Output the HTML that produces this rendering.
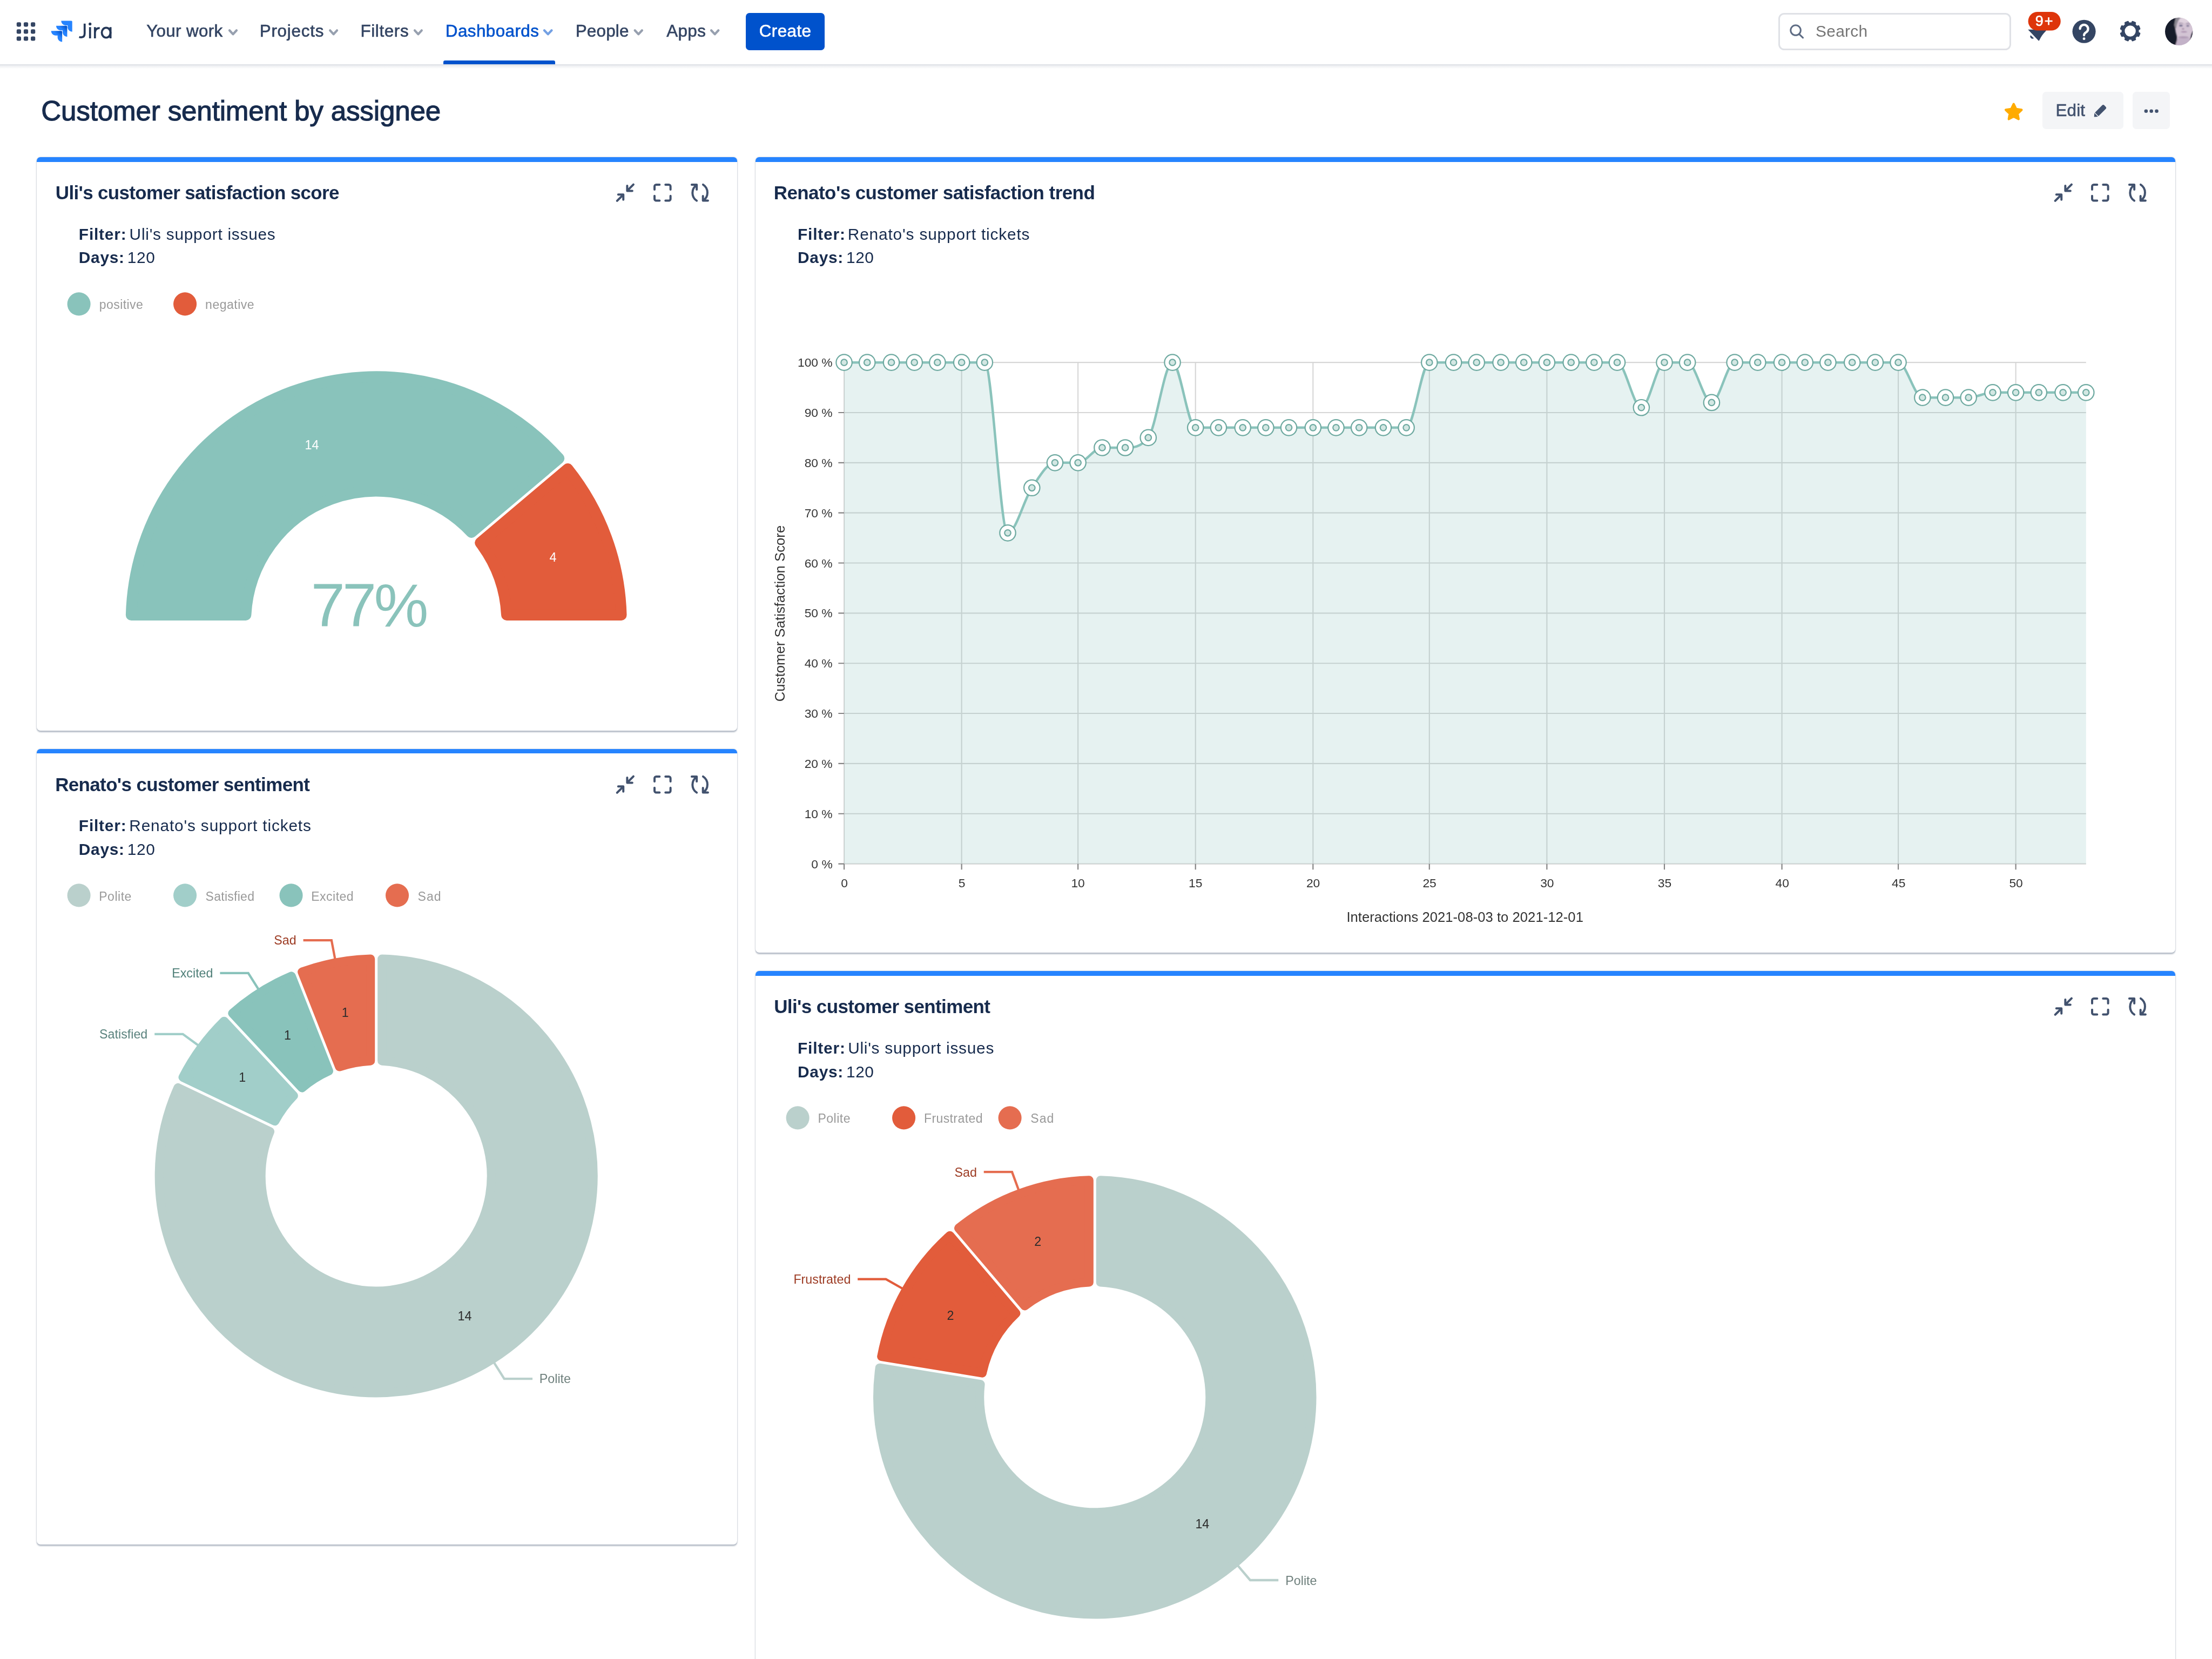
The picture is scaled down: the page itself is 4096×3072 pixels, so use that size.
<!DOCTYPE html>
<html lang="en"><head><meta charset="utf-8"><title>Customer sentiment by assignee - Jira</title>
<style>
*{box-sizing:border-box;margin:0;padding:0}
html,body{width:4096px;height:3072px;overflow:hidden;background:#fff}
body{font-family:"Liberation Sans",sans-serif;-webkit-font-smoothing:antialiased}
#root{position:absolute;left:0;top:0;width:1920px;height:1440px;overflow:hidden;background:#fff;zoom:2.1333333;will-change:transform}
.abs{position:absolute;overflow:visible}
.t{position:absolute;white-space:pre;display:block}
.m{-webkit-text-stroke:0.3px currentColor}
.m2{-webkit-text-stroke:0.55px currentColor}
.nav{position:absolute;left:0;top:0;width:1920px;height:56px;background:#fff}
.navshadow{position:absolute;left:0;top:56px;width:1920px;height:4px;background:linear-gradient(180deg,rgba(9,30,66,0.13) 0,rgba(9,30,66,0.13) 1px,rgba(9,30,66,0.08) 1px,rgba(9,30,66,0) 4px)}
.uline{position:absolute;left:384.9px;top:52.6px;width:97.1px;height:3.4px;background:#0052CC;border-radius:1.5px 1.5px 0 0}
.create{position:absolute;left:647.3px;top:11.2px;width:68.5px;height:32.2px;background:#0052CC;border-radius:3.2px}
.search{position:absolute;left:1543.7px;top:11.3px;width:201.9px;height:32.2px;border:1.7px solid #DFE1E6;border-radius:5px;background:#fff}
.btn{position:absolute;background:#F4F5F7;border-radius:3.2px}
.gadget{position:absolute;background:#fff;border-radius:3.2px;box-shadow:0 0 1px rgba(9,30,66,0.31),0 1px 1px rgba(9,30,66,0.25)}
.gbar{position:absolute;left:0;top:0;right:0;height:4.1px;background:#2684FF;border-radius:3.2px 3.2px 0 0}
</style></head>
<body><div id="root">
<div class="nav">
<svg class="abs" width="700" height="56" viewBox="0 0 700 56"><g fill="#344563"><rect x="14.40" y="19.30" width="3.85" height="3.85" rx="1.1"/><rect x="20.55" y="19.30" width="3.85" height="3.85" rx="1.1"/><rect x="26.70" y="19.30" width="3.85" height="3.85" rx="1.1"/><rect x="14.40" y="25.45" width="3.85" height="3.85" rx="1.1"/><rect x="20.55" y="25.45" width="3.85" height="3.85" rx="1.1"/><rect x="26.70" y="25.45" width="3.85" height="3.85" rx="1.1"/><rect x="14.40" y="31.60" width="3.85" height="3.85" rx="1.1"/><rect x="20.55" y="31.60" width="3.85" height="3.85" rx="1.1"/><rect x="26.70" y="31.60" width="3.85" height="3.85" rx="1.1"/></g>
<defs>
<linearGradient id="jg1" x1="98.03%" y1="0.16%" x2="58.89%" y2="40.77%"><stop offset="18%" stop-color="#0052CC"/><stop offset="100%" stop-color="#2684FF"/></linearGradient>
</defs>
<g transform="translate(41.3 14.95) scale(0.765)">
<path d="M26.94 4H15.41c0 2.87 2.33 5.2 5.2 5.2h2.12v2.05c0 2.87 2.33 5.19 5.19 5.19V4.99A.99.99 0 0 0 26.94 4z" fill="#2684FF"/>
<path d="M21.23 9.74H9.71c0 2.87 2.32 5.19 5.19 5.2h2.12v2.05c.01 2.87 2.33 5.19 5.2 5.19V10.73a.99.99 0 0 0-.99-.99z" fill="url(#jg1)"/>
<path d="M15.53 15.48H4c0 2.87 2.33 5.2 5.2 5.2h2.13v2.05c0 2.86 2.32 5.19 5.18 5.19V16.47a.99.99 0 0 0-.98-.99z" fill="url(#jg1)"/>
</g>
<path d="M199.20 26.4 L202.25 29.7 L205.30 26.4" fill="none" stroke="#42526E" stroke-opacity="0.55" stroke-width="2" stroke-linecap="round" stroke-linejoin="round"/>
<path d="M286.50 26.4 L289.50 29.7 L292.50 26.4" fill="none" stroke="#42526E" stroke-opacity="0.55" stroke-width="2" stroke-linecap="round" stroke-linejoin="round"/>
<path d="M360.00 26.4 L363.00 29.7 L366.00 26.4" fill="none" stroke="#42526E" stroke-opacity="0.55" stroke-width="2" stroke-linecap="round" stroke-linejoin="round"/>
<path d="M472.50 26.4 L475.65 29.7 L478.80 26.4" fill="none" stroke="#0052CC" stroke-opacity="0.55" stroke-width="2" stroke-linecap="round" stroke-linejoin="round"/>
<path d="M551.10 26.4 L554.20 29.7 L557.30 26.4" fill="none" stroke="#42526E" stroke-opacity="0.55" stroke-width="2" stroke-linecap="round" stroke-linejoin="round"/>
<path d="M617.40 26.4 L620.50 29.7 L623.60 26.4" fill="none" stroke="#42526E" stroke-opacity="0.55" stroke-width="2" stroke-linecap="round" stroke-linejoin="round"/>
</svg>
<svg class="abs" width="110" height="56" viewBox="0 0 110 56" role="img" aria-label="Jira"><title>Jira</title><g fill="none" stroke="#253858" stroke-width="1.75"><path d="M73.48 20.55 V29.1 Q73.48 32.4 70.5 32.4 Q69.6 32.4 68.7 32.1"/><path d="M78.16 23.6 V33.23 M82.41 23.6 V33.23 M82.41 28.2 Q82.6 24.3 86.55 24.3 M95.93 23.6 V33.23"/><ellipse cx="92.15" cy="28.4" rx="3.78" ry="4.3"/></g><circle cx="78.16" cy="20.83" r="1.22" fill="#253858"/></svg>
<span class="t m" id="n1" style="left:127.13px;top:19.76px;font-size:14.7px;line-height:14.7px;color:#344563;letter-spacing:0.160px;">Your work</span>
<span class="t m" id="n2" style="left:225.34px;top:19.76px;font-size:14.7px;line-height:14.7px;color:#344563;letter-spacing:0.362px;">Projects</span>
<span class="t m" id="n3" style="left:312.84px;top:19.76px;font-size:14.7px;line-height:14.7px;color:#344563;letter-spacing:0.303px;">Filters</span>
<span class="t m" id="n4" style="left:386.64px;top:19.76px;font-size:14.7px;line-height:14.7px;color:#0052CC;letter-spacing:0.208px;">Dashboards</span>
<span class="t m" id="n5" style="left:499.54px;top:19.76px;font-size:14.7px;line-height:14.7px;color:#344563;letter-spacing:0.117px;">People</span>
<span class="t m" id="n6" style="left:578.52px;top:19.76px;font-size:14.7px;line-height:14.7px;color:#344563;letter-spacing:0.185px;">Apps</span>
<div class="uline"></div>
<div class="create"></div>
<span class="t m" id="create" style="left:658.90px;top:19.76px;font-size:14.7px;line-height:14.7px;color:#fff;letter-spacing:0.216px;">Create</span>
<div class="search"></div>
<span class="t" id="search" style="left:1575.96px;top:20.35px;font-size:14px;line-height:14px;color:#757575;letter-spacing:0.137px;">Search</span>
<svg class="abs" style="left:1540px" width="380" height="56" viewBox="1540 0 380 56"><circle cx="1558.76" cy="26.28" r="4.36" fill="none" stroke="#5E6C84" stroke-width="1.4"/><path d="M1561.9 29.7 L1565.05 32.75" stroke="#5E6C84" stroke-width="1.45" stroke-linecap="round"/><path d="M1760.45 25.7 L1776.3 25.7 L1775.95 26.95 Q1772.2 30.6 1770.25 35.1 Q1769.8 35.75 1769.35 35.1 Z" fill="#344563"/><path d="M1762.71 30.58 L1765.54 33.18 A1.95 1.95 0 0 1 1762.71 30.58 Z" fill="#344563"/><rect x="1760.6" y="10.3" width="28.2" height="16.2" rx="8.1" fill="#DE350B"/><circle cx="1809.1" cy="27.3" r="10.1" fill="#344563"/><path d="M1805.6 25.0 A3.5 3.5 0 1 1 1810.9 28.0 Q1809.1 29.1 1809.1 30.6" fill="none" stroke="#fff" stroke-width="2" stroke-linecap="round"/><circle cx="1809.1" cy="33.6" r="1.15" fill="#fff"/><g fill="#344563"><rect x="-2.0" y="-9.0" width="4.0" height="3.4" rx="0.9" transform="translate(1849.2 27) rotate(22.5)"/><rect x="-2.0" y="-9.0" width="4.0" height="3.4" rx="0.9" transform="translate(1849.2 27) rotate(67.5)"/><rect x="-2.0" y="-9.0" width="4.0" height="3.4" rx="0.9" transform="translate(1849.2 27) rotate(112.5)"/><rect x="-2.0" y="-9.0" width="4.0" height="3.4" rx="0.9" transform="translate(1849.2 27) rotate(157.5)"/><rect x="-2.0" y="-9.0" width="4.0" height="3.4" rx="0.9" transform="translate(1849.2 27) rotate(202.5)"/><rect x="-2.0" y="-9.0" width="4.0" height="3.4" rx="0.9" transform="translate(1849.2 27) rotate(247.5)"/><rect x="-2.0" y="-9.0" width="4.0" height="3.4" rx="0.9" transform="translate(1849.2 27) rotate(292.5)"/><rect x="-2.0" y="-9.0" width="4.0" height="3.4" rx="0.9" transform="translate(1849.2 27) rotate(337.5)"/></g><circle cx="1849.2" cy="27" r="6.15" fill="none" stroke="#344563" stroke-width="2.7"/><defs><clipPath id="avc"><circle cx="0" cy="0" r="12.05"/></clipPath>
<filter id="avb" x="-20%" y="-20%" width="140%" height="140%"><feGaussianBlur stdDeviation="0.45"/></filter></defs>
<g transform="translate(1891.46 27.34)" clip-path="url(#avc)"><rect x="-13" y="-13" width="26" height="26" fill="#d3c4d4"/>
<g filter="url(#avb)">
<ellipse cx="4.5" cy="9.5" rx="8" ry="4.5" fill="#c3b2c8"/>
<ellipse cx="3.8" cy="5.0" rx="4.8" ry="0.9" fill="#a892ae" opacity="0.75"/>
<ellipse cx="4.4" cy="0.3" rx="2.7" ry="0.6" fill="#a78cab"/>
<ellipse cx="3.6" cy="-2.3" rx="1.0" ry="0.6" fill="#9f86a0"/>
<ellipse cx="1.7" cy="-5.1" rx="1.5" ry="0.75" fill="#6f6a8a"/>
<ellipse cx="7.7" cy="-4.85" rx="1.25" ry="0.65" fill="#77708f"/>
<path d="M0.2 -6.8 Q2 -8 3.6 -6.9 M6.2 -6.6 Q7.8 -7.6 9.4 -6.4" stroke="#9a8aa2" stroke-width="0.7" fill="none"/>
<ellipse cx="4.5" cy="-9.5" rx="4.5" ry="2.2" fill="#e0d3df"/>
<path d="M-2.2 -12.5 L1.6 -12.3 L-0.8 -9.1 L-1.8 -6.3 L-2.5 -2.6 L-3.6 -3.0 L-4.4 -5.7 L-3.8 -9.1 Z" fill="#8b8892"/>
<path d="M-2.4 -13 L-3.5 -9.1 L-4.1 -5.7 L-3.3 -3.0 L-2.8 0.6 L-1.8 4.2 L-1.6 7.1 L-2.7 11.0 L-3 13 L-13 13 L-13 -13 Z" fill="#171b2a"/>
<path d="M10.9 2.4 L12.2 -0.5 L13 0 L13 8 L9.7 7.4 Z" fill="#1b1b2b"/>
</g></g></svg>
<span class="t m" id="badge" style="left:1766.66px;top:12.08px;font-size:12.6px;line-height:12.6px;color:#fff;letter-spacing:0.946px;">9+</span>
</div>
<div class="navshadow"></div>
<span class="t m2" id="ptitle" style="left:35.76px;top:84.58px;font-size:24px;line-height:24px;color:#172B4D;letter-spacing:-0.088px;">Customer sentiment by assignee</span>
<div class="btn" style="left:1772.7px;top:79.9px;width:70.2px;height:32.3px"></div>
<div class="btn" style="left:1851.1px;top:79.9px;width:32.3px;height:32.3px"></div>
<span class="t m" id="edit" style="left:1784.34px;top:88.76px;font-size:14.7px;line-height:14.7px;color:#42526E;letter-spacing:0.061px;">Edit</span>
<svg class="abs" style="left:1730px;top:76px" width="170" height="40" viewBox="1730 76 170 40">
<polygon points="1747.70,90.40 1749.79,94.73 1754.55,95.38 1751.08,98.70 1751.93,103.42 1747.70,101.15 1743.47,103.42 1744.32,98.70 1740.85,95.38 1745.61,94.73" fill="#FFAB00" stroke="#FFAB00" stroke-width="2" stroke-linejoin="round"/>
<g fill="#42526E"><circle cx="1862.6" cy="96.5" r="1.55"/><circle cx="1867.2" cy="96.5" r="1.55"/><circle cx="1871.8" cy="96.5" r="1.55"/></g>
<g transform="translate(1817.4 101.7) rotate(-45)" fill="#42526E"><path d="M0.45 -0.25 L2.75 -2.2 V2.2 L0.45 0.25 Q0.1 0 0.45 -0.25 Z"/><path d="M3.4 -2.2 H12.2 A1.35 1.35 0 0 1 13.55 -0.85 V0.85 A1.35 1.35 0 0 1 12.2 2.2 H3.4 Z"/></g>
</svg>
<div class="gadget" id="g1" style="left:32px;top:136.5px;width:608px;height:497.5px">
<div class="gbar"></div>
<svg class="abs" style="left:0;top:0" width="608" height="497.5" viewBox="0 0 608 497.5"><path d="M82.08 397.35 A212.70 212.70 0 0 1 453.26 261.52 L377.35 325.66 A113.40 113.40 0 0 0 181.46 397.35 Z" fill="#89C3BB" stroke="#89C3BB" stroke-width="9.6" stroke-linejoin="round"/><path d="M460.94 270.61 A212.70 212.70 0 0 1 507.32 397.35 L407.94 397.35 A113.40 113.40 0 0 0 385.04 334.75 Z" fill="#E25C3B" stroke="#E25C3B" stroke-width="9.6" stroke-linejoin="round"/></svg><span class="t" id="g1v1" style="left:232.62px;top:244.76px;font-size:10.9px;line-height:10.9px;color:#fff;">14</span><span class="t" id="g1v2" style="left:444.92px;top:342.21px;font-size:10.9px;line-height:10.9px;color:#fff;">4</span><span class="t" id="g1pct" style="left:237.87px;top:362.47px;font-size:53.2px;line-height:53.2px;color:#8AC3BB;letter-spacing:-2.227px;">77%</span>
<span class="t" id="g1t" style="left:16.22px;top:22.52px;font-size:16.4px;line-height:16.4px;color:#172B4D;font-weight:700;letter-spacing:-0.310px;">Uli's customer satisfaction score</span>
<span class="t" id="g1f1" style="left:36.36px;top:59.75px;font-size:14px;line-height:14px;color:#172B4D;font-weight:700;letter-spacing:0.382px;">Filter:</span>
<span class="t" id="g1f2" style="left:80.32px;top:59.75px;font-size:14px;line-height:14px;color:#172B4D;letter-spacing:0.343px;">Uli's support issues</span>
<span class="t" id="g1d1" style="left:36.36px;top:80.25px;font-size:14px;line-height:14px;color:#172B4D;font-weight:700;letter-spacing:0.338px;">Days:</span>
<span class="t" id="g1d2" style="left:78.53px;top:80.25px;font-size:14px;line-height:14px;color:#172B4D;letter-spacing:0.277px;">120</span>
<svg class="abs" style="left:502.9px;top:22.95px" width="15.75" height="15.75" viewBox="0 0 16 16"><path d="M15.2 0.8 L9.9 6.1 M9.7 1.9 V6.4 H14.2 M0.8 15.2 L6.1 9.9 M1.8 9.7 H6.3 V14.2" fill="none" stroke="#42526E" stroke-width="1.9" stroke-linecap="round" stroke-linejoin="round"/></svg>
<svg class="abs" style="left:535.2px;top:22.95px" width="15.75" height="15.75" viewBox="0 0 16 16"><path d="M0.95 5.2 V2.45 A1.5 1.5 0 0 1 2.45 0.95 H5.4 M10.6 0.95 H13.55 A1.5 1.5 0 0 1 15.05 2.45 V5.2 M15.05 10.8 V13.55 A1.5 1.5 0 0 1 13.55 15.05 H10.6 M5.4 15.05 H2.45 A1.5 1.5 0 0 1 0.95 13.55 V10.8" fill="none" stroke="#42526E" stroke-width="1.9" stroke-linecap="round"/></svg>
<svg class="abs" style="left:567.3px;top:22.95px" width="15.75" height="15.75" viewBox="0 0 16 16"><path d="M5.2 1.2 A8.4 8.4 0 0 0 5.3 15.1 M0.9 0.95 H5.3 V5.2 M10.9 0.9 A8.4 8.4 0 0 1 10.9 15.0 M15.2 15.05 H10.8 V10.9" fill="none" stroke="#42526E" stroke-width="1.9" stroke-linecap="round" stroke-linejoin="round"/></svg>
<svg class="abs" style="left:0;top:110px" width="608" height="36" viewBox="0 110 608 36"><circle cx="36.6" cy="127.3" r="10.1" fill="#89C3BB"/><circle cx="128.7" cy="127.3" r="10.1" fill="#E25C3B"/></svg>
<span class="t" id="g1l0" style="left:54.10px;top:122.86px;font-size:10.8px;line-height:10.8px;color:#999;letter-spacing:0.208px;">positive</span>
<span class="t" id="g1l1" style="left:146.18px;top:122.86px;font-size:10.8px;line-height:10.8px;color:#999;letter-spacing:0.224px;">negative</span>
</div>
<div class="gadget" id="g2" style="left:656px;top:136.5px;width:1232px;height:690.5px">
<div class="gbar"></div>
<svg class="abs" style="left:0;top:0" width="1232" height="690.5" viewBox="0 0 1232 690.5"><path d="M71.90 613.40H1154.90M71.90 569.88H1154.90M71.90 526.36H1154.90M71.90 482.84H1154.90M71.90 439.32H1154.90M71.90 395.80H1154.90M71.90 352.28H1154.90M71.90 308.76H1154.90M71.90 265.24H1154.90M71.90 221.72H1154.90M71.90 178.20H1154.90M76.90 178.20V618.40M178.90 178.20V618.40M279.90 178.20V618.40M381.90 178.20V618.40M483.90 178.20V618.40M584.90 178.20V618.40M686.90 178.20V618.40M788.90 178.20V618.40M890.90 178.20V618.40M991.90 178.20V618.40M1093.90 178.20V618.40" fill="none" stroke="#000" stroke-opacity="0.16" stroke-width="1"/><path d="M71.90 613.40H76.90M71.90 569.88H76.90M71.90 526.36H76.90M71.90 482.84H76.90M71.90 439.32H76.90M71.90 395.80H76.90M71.90 352.28H76.90M71.90 308.76H76.90M71.90 265.24H76.90M71.90 221.72H76.90M71.90 178.20H76.90M76.90 613.40V618.40M178.90 613.40V618.40M279.90 613.40V618.40M381.90 613.40V618.40M483.90 613.40V618.40M584.90 613.40V618.40M686.90 613.40V618.40M788.90 613.40V618.40M890.90 613.40V618.40M991.90 613.40V618.40M1093.90 613.40V618.40" fill="none" stroke="#000" stroke-opacity="0.38" stroke-width="1"/><path d="M76.90 178.20 C83.57 178.20 90.23 178.20 96.90 178.20 C103.90 178.20 110.90 178.20 117.90 178.20 C124.57 178.20 131.23 178.20 137.90 178.20 C144.57 178.20 151.23 178.20 157.90 178.20 C164.90 178.20 171.90 178.20 178.90 178.20 C185.57 178.20 192.23 178.20 198.90 178.20 C205.57 178.20 212.23 326.17 218.90 326.17 C225.90 326.17 232.90 297.34 239.90 287.00 C246.57 277.16 253.23 265.24 259.90 265.24 C266.57 265.24 273.23 265.24 279.90 265.24 C286.90 265.24 293.90 252.18 300.90 252.18 C307.57 252.18 314.23 252.18 320.90 252.18 C327.57 252.18 334.23 252.18 340.90 243.48 C347.90 234.34 354.90 178.20 361.90 178.20 C368.57 178.20 375.23 234.78 381.90 234.78 C388.57 234.78 395.23 234.78 401.90 234.78 C408.90 234.78 415.90 234.78 422.90 234.78 C429.57 234.78 436.23 234.78 442.90 234.78 C449.57 234.78 456.23 234.78 462.90 234.78 C469.90 234.78 476.90 234.78 483.90 234.78 C490.57 234.78 497.23 234.78 503.90 234.78 C510.57 234.78 517.23 234.78 523.90 234.78 C530.90 234.78 537.90 234.78 544.90 234.78 C551.57 234.78 558.23 234.78 564.90 234.78 C571.57 234.78 578.23 178.20 584.90 178.20 C591.90 178.20 598.90 178.20 605.90 178.20 C612.57 178.20 619.23 178.20 625.90 178.20 C632.90 178.20 639.90 178.20 646.90 178.20 C653.57 178.20 660.23 178.20 666.90 178.20 C673.57 178.20 680.23 178.20 686.90 178.20 C693.90 178.20 700.90 178.20 707.90 178.20 C714.57 178.20 721.23 178.20 727.90 178.20 C734.57 178.20 741.23 178.20 747.90 178.20 C754.90 178.20 761.90 217.37 768.90 217.37 C775.57 217.37 782.23 178.20 788.90 178.20 C795.57 178.20 802.23 178.20 808.90 178.20 C815.90 178.20 822.90 213.02 829.90 213.02 C836.57 213.02 843.23 178.20 849.90 178.20 C856.57 178.20 863.23 178.20 869.90 178.20 C876.90 178.20 883.90 178.20 890.90 178.20 C897.57 178.20 904.23 178.20 910.90 178.20 C917.57 178.20 924.23 178.20 930.90 178.20 C937.90 178.20 944.90 178.20 951.90 178.20 C958.57 178.20 965.23 178.20 971.90 178.20 C978.57 178.20 985.23 178.20 991.90 178.20 C998.90 178.20 1005.90 208.66 1012.90 208.66 C1019.57 208.66 1026.23 208.66 1032.90 208.66 C1039.57 208.66 1046.23 208.66 1052.90 208.66 C1059.90 208.66 1066.90 204.31 1073.90 204.31 C1080.57 204.31 1087.23 204.31 1093.90 204.31 C1100.57 204.31 1107.23 204.31 1113.90 204.31 C1120.90 204.31 1127.90 204.31 1134.90 204.31 C1141.57 204.31 1148.23 204.31 1154.90 204.31 L1154.90 613.40 L76.90 613.40 Z" fill="#8AC3BB" fill-opacity="0.21"/><path d="M76.90 178.20 C83.57 178.20 90.23 178.20 96.90 178.20 C103.90 178.20 110.90 178.20 117.90 178.20 C124.57 178.20 131.23 178.20 137.90 178.20 C144.57 178.20 151.23 178.20 157.90 178.20 C164.90 178.20 171.90 178.20 178.90 178.20 C185.57 178.20 192.23 178.20 198.90 178.20 C205.57 178.20 212.23 326.17 218.90 326.17 C225.90 326.17 232.90 297.34 239.90 287.00 C246.57 277.16 253.23 265.24 259.90 265.24 C266.57 265.24 273.23 265.24 279.90 265.24 C286.90 265.24 293.90 252.18 300.90 252.18 C307.57 252.18 314.23 252.18 320.90 252.18 C327.57 252.18 334.23 252.18 340.90 243.48 C347.90 234.34 354.90 178.20 361.90 178.20 C368.57 178.20 375.23 234.78 381.90 234.78 C388.57 234.78 395.23 234.78 401.90 234.78 C408.90 234.78 415.90 234.78 422.90 234.78 C429.57 234.78 436.23 234.78 442.90 234.78 C449.57 234.78 456.23 234.78 462.90 234.78 C469.90 234.78 476.90 234.78 483.90 234.78 C490.57 234.78 497.23 234.78 503.90 234.78 C510.57 234.78 517.23 234.78 523.90 234.78 C530.90 234.78 537.90 234.78 544.90 234.78 C551.57 234.78 558.23 234.78 564.90 234.78 C571.57 234.78 578.23 178.20 584.90 178.20 C591.90 178.20 598.90 178.20 605.90 178.20 C612.57 178.20 619.23 178.20 625.90 178.20 C632.90 178.20 639.90 178.20 646.90 178.20 C653.57 178.20 660.23 178.20 666.90 178.20 C673.57 178.20 680.23 178.20 686.90 178.20 C693.90 178.20 700.90 178.20 707.90 178.20 C714.57 178.20 721.23 178.20 727.90 178.20 C734.57 178.20 741.23 178.20 747.90 178.20 C754.90 178.20 761.90 217.37 768.90 217.37 C775.57 217.37 782.23 178.20 788.90 178.20 C795.57 178.20 802.23 178.20 808.90 178.20 C815.90 178.20 822.90 213.02 829.90 213.02 C836.57 213.02 843.23 178.20 849.90 178.20 C856.57 178.20 863.23 178.20 869.90 178.20 C876.90 178.20 883.90 178.20 890.90 178.20 C897.57 178.20 904.23 178.20 910.90 178.20 C917.57 178.20 924.23 178.20 930.90 178.20 C937.90 178.20 944.90 178.20 951.90 178.20 C958.57 178.20 965.23 178.20 971.90 178.20 C978.57 178.20 985.23 178.20 991.90 178.20 C998.90 178.20 1005.90 208.66 1012.90 208.66 C1019.57 208.66 1026.23 208.66 1032.90 208.66 C1039.57 208.66 1046.23 208.66 1052.90 208.66 C1059.90 208.66 1066.90 204.31 1073.90 204.31 C1080.57 204.31 1087.23 204.31 1093.90 204.31 C1100.57 204.31 1107.23 204.31 1113.90 204.31 C1120.90 204.31 1127.90 204.31 1134.90 204.31 C1141.57 204.31 1148.23 204.31 1154.90 204.31" fill="none" stroke="#8AC3BB" stroke-width="2.1" stroke-linejoin="round"/><g fill="#fff" stroke="#6FAAA1" stroke-width="1.05"><circle cx="76.90" cy="178.20" r="6.9"/><circle cx="96.90" cy="178.20" r="6.9"/><circle cx="117.90" cy="178.20" r="6.9"/><circle cx="137.90" cy="178.20" r="6.9"/><circle cx="157.90" cy="178.20" r="6.9"/><circle cx="178.90" cy="178.20" r="6.9"/><circle cx="198.90" cy="178.20" r="6.9"/><circle cx="218.90" cy="326.17" r="6.9"/><circle cx="239.90" cy="287.00" r="6.9"/><circle cx="259.90" cy="265.24" r="6.9"/><circle cx="279.90" cy="265.24" r="6.9"/><circle cx="300.90" cy="252.18" r="6.9"/><circle cx="320.90" cy="252.18" r="6.9"/><circle cx="340.90" cy="243.48" r="6.9"/><circle cx="361.90" cy="178.20" r="6.9"/><circle cx="381.90" cy="234.78" r="6.9"/><circle cx="401.90" cy="234.78" r="6.9"/><circle cx="422.90" cy="234.78" r="6.9"/><circle cx="442.90" cy="234.78" r="6.9"/><circle cx="462.90" cy="234.78" r="6.9"/><circle cx="483.90" cy="234.78" r="6.9"/><circle cx="503.90" cy="234.78" r="6.9"/><circle cx="523.90" cy="234.78" r="6.9"/><circle cx="544.90" cy="234.78" r="6.9"/><circle cx="564.90" cy="234.78" r="6.9"/><circle cx="584.90" cy="178.20" r="6.9"/><circle cx="605.90" cy="178.20" r="6.9"/><circle cx="625.90" cy="178.20" r="6.9"/><circle cx="646.90" cy="178.20" r="6.9"/><circle cx="666.90" cy="178.20" r="6.9"/><circle cx="686.90" cy="178.20" r="6.9"/><circle cx="707.90" cy="178.20" r="6.9"/><circle cx="727.90" cy="178.20" r="6.9"/><circle cx="747.90" cy="178.20" r="6.9"/><circle cx="768.90" cy="217.37" r="6.9"/><circle cx="788.90" cy="178.20" r="6.9"/><circle cx="808.90" cy="178.20" r="6.9"/><circle cx="829.90" cy="213.02" r="6.9"/><circle cx="849.90" cy="178.20" r="6.9"/><circle cx="869.90" cy="178.20" r="6.9"/><circle cx="890.90" cy="178.20" r="6.9"/><circle cx="910.90" cy="178.20" r="6.9"/><circle cx="930.90" cy="178.20" r="6.9"/><circle cx="951.90" cy="178.20" r="6.9"/><circle cx="971.90" cy="178.20" r="6.9"/><circle cx="991.90" cy="178.20" r="6.9"/><circle cx="1012.90" cy="208.66" r="6.9"/><circle cx="1032.90" cy="208.66" r="6.9"/><circle cx="1052.90" cy="208.66" r="6.9"/><circle cx="1073.90" cy="204.31" r="6.9"/><circle cx="1093.90" cy="204.31" r="6.9"/><circle cx="1113.90" cy="204.31" r="6.9"/><circle cx="1134.90" cy="204.31" r="6.9"/><circle cx="1154.90" cy="204.31" r="6.9"/></g><g fill="#D3E7E3" stroke="#6FAAA1" stroke-width="1.05"><circle cx="76.90" cy="178.20" r="2.7"/><circle cx="96.90" cy="178.20" r="2.7"/><circle cx="117.90" cy="178.20" r="2.7"/><circle cx="137.90" cy="178.20" r="2.7"/><circle cx="157.90" cy="178.20" r="2.7"/><circle cx="178.90" cy="178.20" r="2.7"/><circle cx="198.90" cy="178.20" r="2.7"/><circle cx="218.90" cy="326.17" r="2.7"/><circle cx="239.90" cy="287.00" r="2.7"/><circle cx="259.90" cy="265.24" r="2.7"/><circle cx="279.90" cy="265.24" r="2.7"/><circle cx="300.90" cy="252.18" r="2.7"/><circle cx="320.90" cy="252.18" r="2.7"/><circle cx="340.90" cy="243.48" r="2.7"/><circle cx="361.90" cy="178.20" r="2.7"/><circle cx="381.90" cy="234.78" r="2.7"/><circle cx="401.90" cy="234.78" r="2.7"/><circle cx="422.90" cy="234.78" r="2.7"/><circle cx="442.90" cy="234.78" r="2.7"/><circle cx="462.90" cy="234.78" r="2.7"/><circle cx="483.90" cy="234.78" r="2.7"/><circle cx="503.90" cy="234.78" r="2.7"/><circle cx="523.90" cy="234.78" r="2.7"/><circle cx="544.90" cy="234.78" r="2.7"/><circle cx="564.90" cy="234.78" r="2.7"/><circle cx="584.90" cy="178.20" r="2.7"/><circle cx="605.90" cy="178.20" r="2.7"/><circle cx="625.90" cy="178.20" r="2.7"/><circle cx="646.90" cy="178.20" r="2.7"/><circle cx="666.90" cy="178.20" r="2.7"/><circle cx="686.90" cy="178.20" r="2.7"/><circle cx="707.90" cy="178.20" r="2.7"/><circle cx="727.90" cy="178.20" r="2.7"/><circle cx="747.90" cy="178.20" r="2.7"/><circle cx="768.90" cy="217.37" r="2.7"/><circle cx="788.90" cy="178.20" r="2.7"/><circle cx="808.90" cy="178.20" r="2.7"/><circle cx="829.90" cy="213.02" r="2.7"/><circle cx="849.90" cy="178.20" r="2.7"/><circle cx="869.90" cy="178.20" r="2.7"/><circle cx="890.90" cy="178.20" r="2.7"/><circle cx="910.90" cy="178.20" r="2.7"/><circle cx="930.90" cy="178.20" r="2.7"/><circle cx="951.90" cy="178.20" r="2.7"/><circle cx="971.90" cy="178.20" r="2.7"/><circle cx="991.90" cy="178.20" r="2.7"/><circle cx="1012.90" cy="208.66" r="2.7"/><circle cx="1032.90" cy="208.66" r="2.7"/><circle cx="1052.90" cy="208.66" r="2.7"/><circle cx="1073.90" cy="204.31" r="2.7"/><circle cx="1093.90" cy="204.31" r="2.7"/><circle cx="1113.90" cy="204.31" r="2.7"/><circle cx="1134.90" cy="204.31" r="2.7"/><circle cx="1154.90" cy="204.31" r="2.7"/></g></svg><span class="t" id="yt0" style="left:48.24px;top:608.19px;font-size:10.7px;line-height:10.7px;color:#333;">0 %</span><span class="t" id="yt1" style="left:42.29px;top:564.67px;font-size:10.7px;line-height:10.7px;color:#333;">10 %</span><span class="t" id="yt2" style="left:42.29px;top:521.15px;font-size:10.7px;line-height:10.7px;color:#333;">20 %</span><span class="t" id="yt3" style="left:42.29px;top:477.63px;font-size:10.7px;line-height:10.7px;color:#333;">30 %</span><span class="t" id="yt4" style="left:42.29px;top:434.11px;font-size:10.7px;line-height:10.7px;color:#333;">40 %</span><span class="t" id="yt5" style="left:42.29px;top:390.59px;font-size:10.7px;line-height:10.7px;color:#333;">50 %</span><span class="t" id="yt6" style="left:42.29px;top:347.07px;font-size:10.7px;line-height:10.7px;color:#333;">60 %</span><span class="t" id="yt7" style="left:42.29px;top:303.55px;font-size:10.7px;line-height:10.7px;color:#333;">70 %</span><span class="t" id="yt8" style="left:42.29px;top:260.03px;font-size:10.7px;line-height:10.7px;color:#333;">80 %</span><span class="t" id="yt9" style="left:42.29px;top:216.51px;font-size:10.7px;line-height:10.7px;color:#333;">90 %</span><span class="t" id="yt10" style="left:36.34px;top:172.99px;font-size:10.7px;line-height:10.7px;color:#333;">100 %</span><span class="t" id="xt0" style="left:73.92px;top:624.74px;font-size:10.7px;line-height:10.7px;color:#333;">0</span><span class="t" id="xt5" style="left:175.94px;top:624.74px;font-size:10.7px;line-height:10.7px;color:#333;">5</span><span class="t" id="xt10" style="left:273.75px;top:624.74px;font-size:10.7px;line-height:10.7px;color:#333;">10</span><span class="t" id="xt15" style="left:375.77px;top:624.74px;font-size:10.7px;line-height:10.7px;color:#333;">15</span><span class="t" id="xt20" style="left:477.89px;top:624.74px;font-size:10.7px;line-height:10.7px;color:#333;">20</span><span class="t" id="xt25" style="left:578.90px;top:624.74px;font-size:10.7px;line-height:10.7px;color:#333;">25</span><span class="t" id="xt30" style="left:680.95px;top:624.74px;font-size:10.7px;line-height:10.7px;color:#333;">30</span><span class="t" id="xt35" style="left:782.97px;top:624.74px;font-size:10.7px;line-height:10.7px;color:#333;">35</span><span class="t" id="xt40" style="left:885.04px;top:624.74px;font-size:10.7px;line-height:10.7px;color:#333;">40</span><span class="t" id="xt45" style="left:986.05px;top:624.74px;font-size:10.7px;line-height:10.7px;color:#333;">45</span><span class="t" id="xt50" style="left:1087.94px;top:624.74px;font-size:10.7px;line-height:10.7px;color:#333;">50</span><span class="t" id="xtitle" style="left:512.79px;top:653.64px;font-size:12px;line-height:12px;color:#333;letter-spacing:0.025px;">Interactions 2021-08-03 to 2021-12-01</span><span class="t" id="ytitle" style="left:21.2px;top:395.80px;font-size:12px;line-height:12px;color:#333;letter-spacing:0.042px;transform:translate(-50%,-50%) rotate(-90deg);">Customer Satisfaction Score</span>
<span class="t" id="g2t" style="left:15.60px;top:22.52px;font-size:16.4px;line-height:16.4px;color:#172B4D;font-weight:700;letter-spacing:-0.262px;">Renato's customer satisfaction trend</span>
<span class="t" id="g2f1" style="left:36.36px;top:59.75px;font-size:14px;line-height:14px;color:#172B4D;font-weight:700;letter-spacing:0.382px;">Filter:</span>
<span class="t" id="g2f2" style="left:79.85px;top:59.75px;font-size:14px;line-height:14px;color:#172B4D;letter-spacing:0.386px;">Renato's support tickets</span>
<span class="t" id="g2d1" style="left:36.36px;top:80.25px;font-size:14px;line-height:14px;color:#172B4D;font-weight:700;letter-spacing:0.338px;">Days:</span>
<span class="t" id="g2d2" style="left:78.53px;top:80.25px;font-size:14px;line-height:14px;color:#172B4D;letter-spacing:0.277px;">120</span>
<svg class="abs" style="left:1126.9px;top:22.95px" width="15.75" height="15.75" viewBox="0 0 16 16"><path d="M15.2 0.8 L9.9 6.1 M9.7 1.9 V6.4 H14.2 M0.8 15.2 L6.1 9.9 M1.8 9.7 H6.3 V14.2" fill="none" stroke="#42526E" stroke-width="1.9" stroke-linecap="round" stroke-linejoin="round"/></svg>
<svg class="abs" style="left:1159.2px;top:22.95px" width="15.75" height="15.75" viewBox="0 0 16 16"><path d="M0.95 5.2 V2.45 A1.5 1.5 0 0 1 2.45 0.95 H5.4 M10.6 0.95 H13.55 A1.5 1.5 0 0 1 15.05 2.45 V5.2 M15.05 10.8 V13.55 A1.5 1.5 0 0 1 13.55 15.05 H10.6 M5.4 15.05 H2.45 A1.5 1.5 0 0 1 0.95 13.55 V10.8" fill="none" stroke="#42526E" stroke-width="1.9" stroke-linecap="round"/></svg>
<svg class="abs" style="left:1191.3px;top:22.95px" width="15.75" height="15.75" viewBox="0 0 16 16"><path d="M5.2 1.2 A8.4 8.4 0 0 0 5.3 15.1 M0.9 0.95 H5.3 V5.2 M10.9 0.9 A8.4 8.4 0 0 1 10.9 15.0 M15.2 15.05 H10.8 V10.9" fill="none" stroke="#42526E" stroke-width="1.9" stroke-linecap="round" stroke-linejoin="round"/></svg>
</div>
<div class="gadget" id="g3" style="left:32px;top:650px;width:608px;height:690.5px">
<div class="gbar"></div>
<svg class="abs" style="left:0;top:0" width="608" height="690.5" viewBox="0 0 608 690.5"><path d="M396.99 532.63 L405.80 546.58 L430.30 546.58" fill="none" stroke="#BAD0CC" stroke-width="2" stroke-linejoin="miter"/><path d="M140.10 257.15 L126.80 247.39 L102.30 247.39" fill="none" stroke="#A1CEC9" stroke-width="2" stroke-linejoin="miter"/><path d="M192.41 208.37 L183.60 194.42 L159.10 194.42" fill="none" stroke="#89C3BB" stroke-width="2" stroke-linejoin="miter"/><path d="M258.94 182.16 L255.87 165.95 L231.37 165.95" fill="none" stroke="#E56D50" stroke-width="2" stroke-linejoin="miter"/><path d="M299.65 182.17 A188.40 188.40 0 1 1 122.58 293.89 L202.51 332.01 A99.90 99.90 0 1 0 299.65 270.72 Z" fill="#BAD0CC" stroke="#BAD0CC" stroke-width="7.6" stroke-linejoin="round"/><path d="M126.84 284.95 A188.40 188.40 0 0 1 162.64 236.14 L223.03 300.90 A99.90 99.90 0 0 0 206.77 323.08 Z" fill="#A1CEC9" stroke="#A1CEC9" stroke-width="7.6" stroke-linejoin="round"/><path d="M169.88 229.38 A188.40 188.40 0 0 1 221.07 197.08 L253.53 279.48 A99.90 99.90 0 0 0 230.27 294.15 Z" fill="#89C3BB" stroke="#89C3BB" stroke-width="7.6" stroke-linejoin="round"/><path d="M230.28 193.46 A188.40 188.40 0 0 1 289.75 182.17 L289.75 270.72 A99.90 99.90 0 0 0 262.74 275.85 Z" fill="#E56D50" stroke="#E56D50" stroke-width="7.6" stroke-linejoin="round"/></svg><span class="t" id="g3o0" style="left:436.20px;top:541.60px;font-size:10.9px;line-height:10.9px;color:#6F807D;">Polite</span><span class="t" id="g3v0" style="left:365.30px;top:487.08px;font-size:10.9px;line-height:10.9px;color:#2b2b2b;">14</span><span class="t" id="g3o1" style="left:54.29px;top:242.41px;font-size:10.9px;line-height:10.9px;color:#5A827D;">Satisfied</span><span class="t" id="g3v1" style="left:175.27px;top:279.94px;font-size:10.9px;line-height:10.9px;color:#2b2b2b;">1</span><span class="t" id="g3o2" style="left:117.16px;top:189.44px;font-size:10.9px;line-height:10.9px;color:#4F7F78;">Excited</span><span class="t" id="g3v2" style="left:214.60px;top:243.26px;font-size:10.9px;line-height:10.9px;color:#2b2b2b;">1</span><span class="t" id="g3o3" style="left:205.77px;top:160.98px;font-size:10.9px;line-height:10.9px;color:#9C3A22;">Sad</span><span class="t" id="g3v3" style="left:264.63px;top:223.55px;font-size:10.9px;line-height:10.9px;color:#2b2b2b;">1</span>
<span class="t" id="g3t" style="left:15.90px;top:22.52px;font-size:16.4px;line-height:16.4px;color:#172B4D;font-weight:700;letter-spacing:-0.300px;">Renato's customer sentiment</span>
<span class="t" id="g3f1" style="left:36.36px;top:59.75px;font-size:14px;line-height:14px;color:#172B4D;font-weight:700;letter-spacing:0.382px;">Filter:</span>
<span class="t" id="g3f2" style="left:80.15px;top:59.75px;font-size:14px;line-height:14px;color:#172B4D;letter-spacing:0.386px;">Renato's support tickets</span>
<span class="t" id="g3d1" style="left:36.36px;top:80.25px;font-size:14px;line-height:14px;color:#172B4D;font-weight:700;letter-spacing:0.338px;">Days:</span>
<span class="t" id="g3d2" style="left:78.53px;top:80.25px;font-size:14px;line-height:14px;color:#172B4D;letter-spacing:0.277px;">120</span>
<svg class="abs" style="left:502.9px;top:22.95px" width="15.75" height="15.75" viewBox="0 0 16 16"><path d="M15.2 0.8 L9.9 6.1 M9.7 1.9 V6.4 H14.2 M0.8 15.2 L6.1 9.9 M1.8 9.7 H6.3 V14.2" fill="none" stroke="#42526E" stroke-width="1.9" stroke-linecap="round" stroke-linejoin="round"/></svg>
<svg class="abs" style="left:535.2px;top:22.95px" width="15.75" height="15.75" viewBox="0 0 16 16"><path d="M0.95 5.2 V2.45 A1.5 1.5 0 0 1 2.45 0.95 H5.4 M10.6 0.95 H13.55 A1.5 1.5 0 0 1 15.05 2.45 V5.2 M15.05 10.8 V13.55 A1.5 1.5 0 0 1 13.55 15.05 H10.6 M5.4 15.05 H2.45 A1.5 1.5 0 0 1 0.95 13.55 V10.8" fill="none" stroke="#42526E" stroke-width="1.9" stroke-linecap="round"/></svg>
<svg class="abs" style="left:567.3px;top:22.95px" width="15.75" height="15.75" viewBox="0 0 16 16"><path d="M5.2 1.2 A8.4 8.4 0 0 0 5.3 15.1 M0.9 0.95 H5.3 V5.2 M10.9 0.9 A8.4 8.4 0 0 1 10.9 15.0 M15.2 15.05 H10.8 V10.9" fill="none" stroke="#42526E" stroke-width="1.9" stroke-linecap="round" stroke-linejoin="round"/></svg>
<svg class="abs" style="left:0;top:110px" width="608" height="36" viewBox="0 110 608 36"><circle cx="36.6" cy="127.3" r="10.1" fill="#BAD0CC"/><circle cx="128.7" cy="127.3" r="10.1" fill="#A1CEC9"/><circle cx="220.8" cy="127.3" r="10.1" fill="#89C3BB"/><circle cx="312.9" cy="127.3" r="10.1" fill="#E56D50"/></svg>
<span class="t" id="g3l0" style="left:53.91px;top:122.86px;font-size:10.8px;line-height:10.8px;color:#999;letter-spacing:0.230px;">Polite</span>
<span class="t" id="g3l1" style="left:146.41px;top:122.86px;font-size:10.8px;line-height:10.8px;color:#999;letter-spacing:0.120px;">Satisfied</span>
<span class="t" id="g3l2" style="left:238.11px;top:122.86px;font-size:10.8px;line-height:10.8px;color:#999;letter-spacing:0.228px;">Excited</span>
<span class="t" id="g3l3" style="left:330.61px;top:122.86px;font-size:10.8px;line-height:10.8px;color:#999;letter-spacing:0.485px;">Sad</span>
</div>
<div class="gadget" id="g4" style="left:656px;top:843px;width:1232px;height:640px">
<div class="gbar"></div>
<svg class="abs" style="left:0;top:0" width="1232" height="640" viewBox="0 0 1232 640"><path d="M418.68 516.17 L429.36 528.75 L453.86 528.75" fill="none" stroke="#BAD0CC" stroke-width="2" stroke-linejoin="miter"/><path d="M127.52 275.63 L113.16 267.51 L88.66 267.51" fill="none" stroke="#E25C3B" stroke-width="2" stroke-linejoin="miter"/><path d="M228.35 189.97 L222.66 174.48 L198.16 174.48" fill="none" stroke="#E56D50" stroke-width="2" stroke-linejoin="miter"/><path d="M299.45 181.57 A188.50 188.50 0 1 1 107.74 344.43 L195.23 358.76 A99.90 99.90 0 1 0 299.45 270.22 Z" fill="#BAD0CC" stroke="#BAD0CC" stroke-width="7.6" stroke-linejoin="round"/><path d="M109.34 334.66 A188.50 188.50 0 0 1 168.72 229.60 L226.13 297.16 A99.90 99.90 0 0 0 196.83 348.99 Z" fill="#E25C3B" stroke="#E25C3B" stroke-width="7.6" stroke-linejoin="round"/><path d="M176.27 223.19 A188.50 188.50 0 0 1 289.55 181.57 L289.55 270.22 A99.90 99.90 0 0 0 233.67 290.75 Z" fill="#E56D50" stroke="#E56D50" stroke-width="7.6" stroke-linejoin="round"/></svg><span class="t" id="g4o0" style="left:459.77px;top:523.77px;font-size:10.9px;line-height:10.9px;color:#6F807D;">Polite</span><span class="t" id="g4v0" style="left:381.55px;top:474.57px;font-size:10.9px;line-height:10.9px;color:#2b2b2b;">14</span><span class="t" id="g4o1" style="left:32.79px;top:262.53px;font-size:10.9px;line-height:10.9px;color:#9C3A22;">Frustrated</span><span class="t" id="g4v1" style="left:165.93px;top:293.72px;font-size:10.9px;line-height:10.9px;color:#2b2b2b;">2</span><span class="t" id="g4o2" style="left:172.57px;top:169.50px;font-size:10.9px;line-height:10.9px;color:#9C3A22;">Sad</span><span class="t" id="g4v2" style="left:241.74px;top:229.32px;font-size:10.9px;line-height:10.9px;color:#2b2b2b;">2</span>
<span class="t" id="g4t" style="left:15.82px;top:22.52px;font-size:16.4px;line-height:16.4px;color:#172B4D;font-weight:700;letter-spacing:-0.278px;">Uli's customer sentiment</span>
<span class="t" id="g4f1" style="left:36.36px;top:59.75px;font-size:14px;line-height:14px;color:#172B4D;font-weight:700;letter-spacing:0.382px;">Filter:</span>
<span class="t" id="g4f2" style="left:80.02px;top:59.75px;font-size:14px;line-height:14px;color:#172B4D;letter-spacing:0.343px;">Uli's support issues</span>
<span class="t" id="g4d1" style="left:36.36px;top:80.25px;font-size:14px;line-height:14px;color:#172B4D;font-weight:700;letter-spacing:0.338px;">Days:</span>
<span class="t" id="g4d2" style="left:78.53px;top:80.25px;font-size:14px;line-height:14px;color:#172B4D;letter-spacing:0.277px;">120</span>
<svg class="abs" style="left:1126.9px;top:22.95px" width="15.75" height="15.75" viewBox="0 0 16 16"><path d="M15.2 0.8 L9.9 6.1 M9.7 1.9 V6.4 H14.2 M0.8 15.2 L6.1 9.9 M1.8 9.7 H6.3 V14.2" fill="none" stroke="#42526E" stroke-width="1.9" stroke-linecap="round" stroke-linejoin="round"/></svg>
<svg class="abs" style="left:1159.2px;top:22.95px" width="15.75" height="15.75" viewBox="0 0 16 16"><path d="M0.95 5.2 V2.45 A1.5 1.5 0 0 1 2.45 0.95 H5.4 M10.6 0.95 H13.55 A1.5 1.5 0 0 1 15.05 2.45 V5.2 M15.05 10.8 V13.55 A1.5 1.5 0 0 1 13.55 15.05 H10.6 M5.4 15.05 H2.45 A1.5 1.5 0 0 1 0.95 13.55 V10.8" fill="none" stroke="#42526E" stroke-width="1.9" stroke-linecap="round"/></svg>
<svg class="abs" style="left:1191.3px;top:22.95px" width="15.75" height="15.75" viewBox="0 0 16 16"><path d="M5.2 1.2 A8.4 8.4 0 0 0 5.3 15.1 M0.9 0.95 H5.3 V5.2 M10.9 0.9 A8.4 8.4 0 0 1 10.9 15.0 M15.2 15.05 H10.8 V10.9" fill="none" stroke="#42526E" stroke-width="1.9" stroke-linecap="round" stroke-linejoin="round"/></svg>
<svg class="abs" style="left:0;top:110px" width="1232" height="36" viewBox="0 110 1232 36"><circle cx="36.6" cy="127.3" r="10.1" fill="#BAD0CC"/><circle cx="128.7" cy="127.3" r="10.1" fill="#E25C3B"/><circle cx="220.8" cy="127.3" r="10.1" fill="#E56D50"/></svg>
<span class="t" id="g4l0" style="left:53.91px;top:122.86px;font-size:10.8px;line-height:10.8px;color:#999;letter-spacing:0.230px;">Polite</span>
<span class="t" id="g4l1" style="left:146.01px;top:122.86px;font-size:10.8px;line-height:10.8px;color:#999;letter-spacing:0.185px;">Frustrated</span>
<span class="t" id="g4l2" style="left:238.51px;top:122.86px;font-size:10.8px;line-height:10.8px;color:#999;letter-spacing:0.485px;">Sad</span>
</div>
</div></body></html>
